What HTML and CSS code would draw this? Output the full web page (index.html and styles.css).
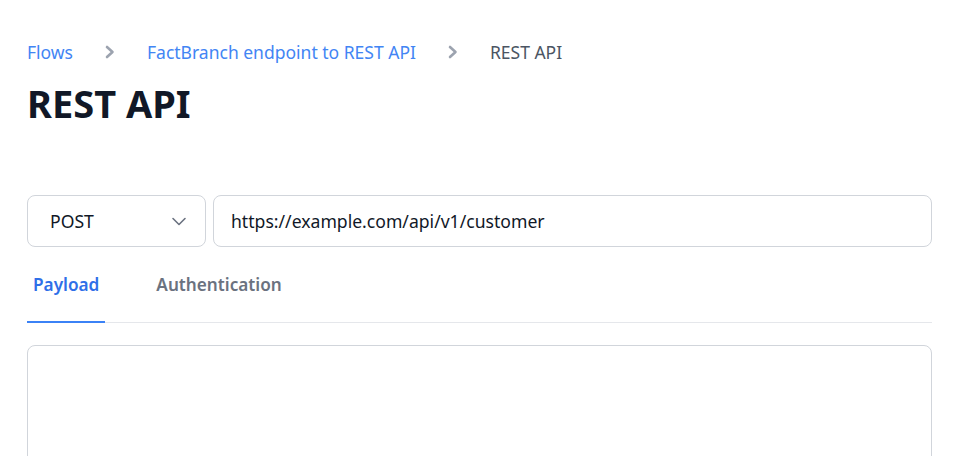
FILE: index.html
```html
<!DOCTYPE html>
<html lang="en">

<head>
    <meta charset="UTF-8">
    <meta name="viewport" content="width=device-width, initial-scale=1.0">
    <title>REST API</title>
    <link rel="stylesheet" href="styles.css">
</head>

<body>
    <div class="page">
        <nav class="crumbs">
            <a href="#">Flows</a>
            <svg class="crumb-sep" width="10" height="14" viewBox="0 0 10 14">
                <polyline points="2,2 7.5,7 2,12" fill="none" stroke="currentColor" stroke-width="2.6" stroke-linecap="round" stroke-linejoin="round" />
            </svg>
            <a href="#">FactBranch endpoint to REST API</a>
            <svg class="crumb-sep" width="10" height="14" viewBox="0 0 10 14">
                <polyline points="2,2 7.5,7 2,12" fill="none" stroke="currentColor" stroke-width="2.6" stroke-linecap="round" stroke-linejoin="round" />
            </svg>
            <span class="current">REST API</span>
        </nav>

        <h1 class="title">REST API</h1>

        <div class="request">
            <div class="method">
                <span>POST</span>
                <svg width="16" height="9" viewBox="0 0 16 9">
                    <polyline points="2,1.5 8,7.5 14,1.5" fill="none" stroke="currentColor" stroke-width="1.6" stroke-linecap="round" stroke-linejoin="round" />
                </svg>
            </div>
            <div class="url">https://example.com/api/v1/customer</div>
        </div>

        <div class="tabs">
            <a href="#" class="tab active">Payload</a>
            <a href="#" class="tab">Authentication</a>
        </div>

        <div class="payload"></div>
    </div>
</body>

</html>
```

FILE: styles.css
```css
body {
    margin: 0;
    background: #fff;
    font-family: "Noto Sans", "Open Sans", sans-serif;
    color: #111827;
}

.page {
    padding: 38px 31px 0 27px;
}

a {
    text-decoration: none;
}

.crumbs {
    display: flex;
    align-items: center;
    gap: 32px;
    height: 28px;
    font-size: 17.5px;
}

.crumbs a {
    color: #4285f4;
}

.crumb-sep {
    color: #9ca3af;
}

.current {
    color: #4b5563;
}

.title {
    margin: 14px 0 0;
    font-size: 38px;
    line-height: 46px;
    font-weight: 700;
    color: #111827;
}

.request {
    display: flex;
    gap: 7px;
    margin-top: 69px;
    height: 52px;
    font-size: 17.6px;
}

.method,
.url {
    display: flex;
    align-items: center;
    border: 1px solid #d1d5db;
    border-radius: 8px;
    box-sizing: border-box;
}

.method {
    width: 179px;
    padding: 0 18px 0 22px;
    justify-content: space-between;
}

.method svg {
    color: #6b7280;
}

.url {
    flex: 1;
    padding: 0 17px;
}

.tabs {
    display: flex;
    gap: 45px;
    margin-top: 16px;
    border-bottom: 1px solid #e5e7eb;
}

.tab {
    padding: 10px 6px 24px;
    line-height: 24px;
    font-size: 17.2px;
    font-weight: 600;
    color: #6b7280;
    border-bottom: 2px solid transparent;
    margin-bottom: -1px;
}

.tab.active {
    color: #2f6fe8;
    border-bottom-color: #3b82f6;
}

.payload {
    margin-top: 22px;
    height: 300px;
    border: 1px solid #d1d5db;
    border-radius: 8px;
}
```
